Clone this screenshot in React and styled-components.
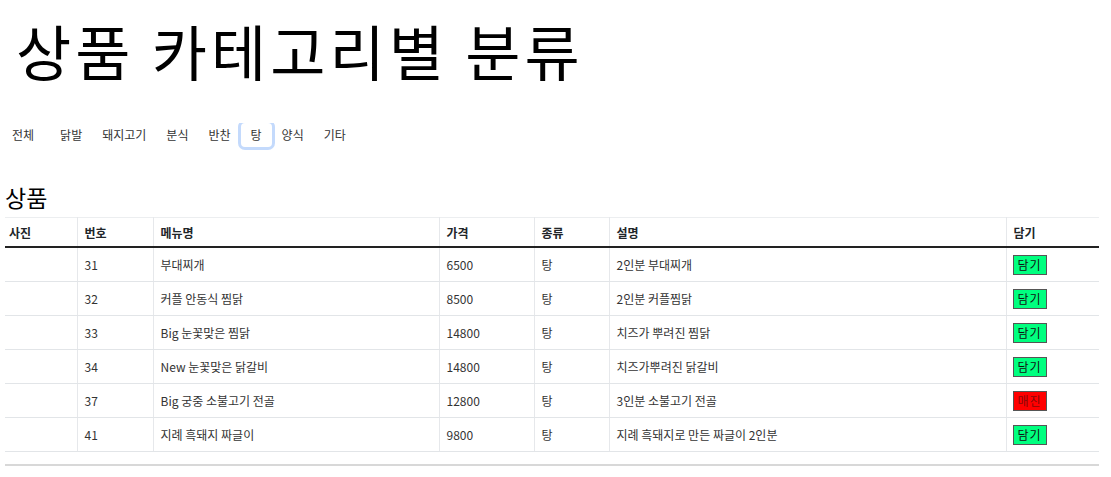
import React from 'react';
import styled, { createGlobalStyle } from 'styled-components';

const GlobalStyle = createGlobalStyle`
  body {
    margin: 0;
    background: #fff;
    font-family: "Noto Sans CJK KR", "Noto Sans", sans-serif;
    color: #212529;
  }
`;

const Page = styled.div`
  padding: 0 12px 0 5px;
`;

const Title = styled.h1`
  margin: 13px 0 0 11px;
  font-size: 60px;
  font-weight: 400;
  line-height: 74px;
  letter-spacing: 4px;
  color: #000;
`;

const CategoryBar = styled.div`
  display: flex;
  margin: 36px 0 0 -3px;
  padding-bottom: 5px;
  overflow: hidden;
`;

const CategoryButton = styled.button`
  height: 24px;
  padding: 0 10px;
  border: none;
  border-radius: 4px;
  background: transparent;
  font-family: inherit;
  font-size: 12px;
  line-height: 24px;
  color: #333;
  box-shadow: ${p => (p.$active ? '0 0 0 3px #c4dafc' : 'none')};

  &:first-child {
    margin-right: 6px;
  }
`;

const SectionTitle = styled.h2`
  margin: 30px 0 5px;
  font-size: 23px;
  font-weight: 400;
  line-height: 30px;
  color: #000;
`;

const Table = styled.table`
  width: 100%;
  border-collapse: collapse;
  table-layout: fixed;
  font-size: 12px;
  border-top: 1px solid #eceef0;
`;

const HeadCell = styled.th`
  height: 28px;
  padding: 0 7px;
  text-align: left;
  font-weight: 700;
  color: #212529;
  border-bottom: 2px solid #222;
  border-left: 1px solid #e6e8eb;

  &:first-child {
    border-left: none;
    padding-left: 4px;
  }
`;

const Cell = styled.td`
  height: 33px;
  padding: 0 7px;
  color: #333;
  border-bottom: 1px solid #e2e5e8;
  border-left: 1px solid #e6e8eb;

  &:first-child {
    border-left: none;
    padding-left: 4px;
  }
`;

const CartButton = styled.button`
  height: 20px;
  padding: 0 4px;
  margin-left: -1px;
  border: 1px solid #555;
  background: ${p => (p.disabled ? '#ff0000' : '#00ff7f')};
  color: ${p => (p.disabled ? 'rgba(16,16,16,0.55)' : '#111')};
  font-family: inherit;
  font-size: 12px;
  line-height: 18px;
  letter-spacing: 1px;
`;

const Divider = styled.div`
  height: 2px;
  margin-top: 12px;
  background: #d8d8d8;
`;

const categories = ['전체', '닭발', '돼지고기', '분식', '반찬', '탕', '양식', '기타'];

const columns = [
  { label: '사진', width: 72 },
  { label: '번호', width: 76 },
  { label: '메뉴명', width: 286 },
  { label: '가격', width: 95 },
  { label: '종류', width: 75 },
  { label: '설명', width: 397 },
  { label: '담기', width: 93 },
];

const products = [
  { id: 31, name: '부대찌개', price: 6500, type: '탕', desc: '2인분 부대찌개', soldOut: false },
  { id: 32, name: '커플 안동식 찜닭', price: 8500, type: '탕', desc: '2인분 커플찜닭', soldOut: false },
  { id: 33, name: 'Big 눈꽃맞은 찜닭', price: 14800, type: '탕', desc: '치즈가 뿌려진 찜닭', soldOut: false },
  { id: 34, name: 'New 눈꽃맞은 닭갈비', price: 14800, type: '탕', desc: '치즈가뿌려진 닭갈비', soldOut: false },
  { id: 37, name: 'Big 궁중 소불고기 전골', price: 12800, type: '탕', desc: '3인분 소불고기 전골', soldOut: true },
  { id: 41, name: '지례 흑돼지 짜글이', price: 9800, type: '탕', desc: '지례 흑돼지로 만든 짜글이 2인분', soldOut: false },
];

const App = () => {
  return (
    <Page>
      <GlobalStyle />
      <Title>상품 카테고리별 분류</Title>

      <CategoryBar>
        {categories.map(c => (
          <CategoryButton key={c} $active={c === '탕'}>
            {c}
          </CategoryButton>
        ))}
      </CategoryBar>

      <SectionTitle>상품</SectionTitle>
      <Table>
        <colgroup>
          {columns.map(col => (
            <col key={col.label} style={{ width: col.width }} />
          ))}
        </colgroup>
        <thead>
          <tr>
            {columns.map(col => (
              <HeadCell key={col.label}>{col.label}</HeadCell>
            ))}
          </tr>
        </thead>
        <tbody>
          {products.map(p => (
            <tr key={p.id}>
              <Cell />
              <Cell>{p.id}</Cell>
              <Cell>{p.name}</Cell>
              <Cell>{p.price}</Cell>
              <Cell>{p.type}</Cell>
              <Cell>{p.desc}</Cell>
              <Cell>
                <CartButton disabled={p.soldOut}>{p.soldOut ? '매진' : '담기'}</CartButton>
              </Cell>
            </tr>
          ))}
        </tbody>
      </Table>
      <Divider />
    </Page>
  );
};

export default App;
